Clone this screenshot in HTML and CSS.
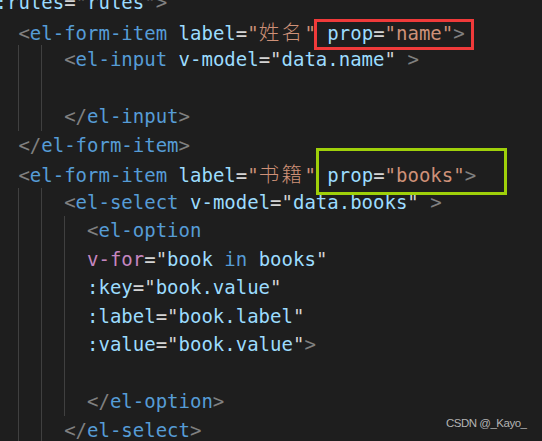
FILE: index.html
```html
<!DOCTYPE html>
<html lang="zh">
<head>
  <meta charset="UTF-8" />
  <title>el-form-item prop</title>
  <link rel="stylesheet" href="styles.css">
</head>
<body>
  <div class="editor">
    <div class="code">
      <div class="ln"><span class="a">:rules</span><span class="p">="</span><span class="v">rules</span><span class="p">"</span><span class="t">&gt;</span></div>
      <div class="ln">  <span class="t">&lt;</span><span class="n">el-form-item</span> <span class="a">label</span><span class="p">=</span><span class="s">"<span class="cjk">姓名</span>"</span> <span class="a">prop</span><span class="p">=</span><span class="s">"name"</span><span class="t">&gt;</span></div>
      <div class="ln">  <span class="ig"></span><span class="ig"></span><span class="t">&lt;</span><span class="n">el-input</span> <span class="a">v-model</span><span class="p">="</span><span class="v">data.name</span><span class="p">"</span> <span class="t">&gt;</span></div>
      <div class="ln">  <span class="ig"></span><span class="ig"></span></div>
      <div class="ln">  <span class="ig"></span><span class="ig"></span><span class="t">&lt;/</span><span class="n">el-input</span><span class="t">&gt;</span></div>
      <div class="ln">  <span class="t">&lt;/</span><span class="n">el-form-item</span><span class="t">&gt;</span></div>
      <div class="ln">  <span class="t">&lt;</span><span class="n">el-form-item</span> <span class="a">label</span><span class="p">=</span><span class="s">"<span class="cjk">书籍</span>"</span> <span class="a">prop</span><span class="p">=</span><span class="s">"books"</span><span class="t">&gt;</span></div>
      <div class="ln">  <span class="ig"></span><span class="ig"></span><span class="t">&lt;</span><span class="n">el-select</span> <span class="a">v-model</span><span class="p">="</span><span class="v">data.books</span><span class="p">"</span> <span class="t">&gt;</span></div>
      <div class="ln">  <span class="ig"></span><span class="ig"></span><span class="ig"></span><span class="t">&lt;</span><span class="n">el-option</span></div>
      <div class="ln">  <span class="ig"></span><span class="ig"></span><span class="ig"></span><span class="d">v-for</span><span class="p">="</span><span class="v">book</span> <span class="k">in</span> <span class="v">books</span><span class="p">"</span></div>
      <div class="ln">  <span class="ig"></span><span class="ig"></span><span class="ig"></span><span class="a">:key</span><span class="p">="</span><span class="v">book.value</span><span class="p">"</span></div>
      <div class="ln">  <span class="ig"></span><span class="ig"></span><span class="ig"></span><span class="a">:label</span><span class="p">="</span><span class="v">book.label</span><span class="p">"</span></div>
      <div class="ln">  <span class="ig"></span><span class="ig"></span><span class="ig"></span><span class="a">:value</span><span class="p">="</span><span class="v">book.value</span><span class="p">"</span><span class="t">&gt;</span></div>
      <div class="ln">  <span class="ig"></span><span class="ig"></span><span class="ig"></span></div>
      <div class="ln">  <span class="ig"></span><span class="ig"></span><span class="ig"></span><span class="t">&lt;/</span><span class="n">el-option</span><span class="t">&gt;</span></div>
      <div class="ln">  <span class="ig"></span><span class="ig"></span><span class="t">&lt;/</span><span class="n">el-select</span><span class="t">&gt;</span></div>
    </div>

    <!-- 标注框 -->
    <div class="mark mark-red"></div>
    <div class="mark mark-green"></div>

    <div class="watermark">CSDN @_Kayo_</div>
  </div>
</body>
</html>
```

FILE: styles.css
```css
html, body {
  margin: 0;
  padding: 0;
  background: #1e1e1e;
  overflow: hidden;
}

.editor {
  position: relative;
  width: 542px;
  height: 441px;
  overflow: hidden;
  background: #1e1e1e;
}

.code {
  margin-top: -12px;
  margin-left: -4.5px;
  font-family: "DejaVu Sans Mono", "Liberation Mono", monospace;
  font-size: 19px;
  color: #d4d4d4;
}

.ln {
  height: 28.5px;
  line-height: 28.5px;
  white-space: pre;
}

/* indent guides */
.ig {
  display: inline-block;
  width: 2ch;
  height: 28.5px;
  vertical-align: top;
  box-shadow: inset 1px 0 0 #404040;
}

.t { color: #808080; }
.n { color: #569cd6; }
.a { color: #9cdcfe; }
.p { color: #d4d4d4; }
.s { color: #ce9178; }
.v { color: #9cdcfe; }
.k { color: #569cd6; }
.d { color: #c586c0; }

.cjk {
  font-family: "Noto Sans CJK SC", sans-serif;
  font-size: 20.5px;
  font-weight: 300;
  letter-spacing: 2.38px;
}

.mark {
  position: absolute;
  box-sizing: border-box;
  border: 3px solid;
}

.mark-red {
  left: 314px;
  top: 19px;
  width: 160px;
  height: 31px;
  border-color: #f03a3a;
}

.mark-green {
  left: 316px;
  top: 148px;
  width: 191px;
  height: 47px;
  border-color: #9fd00a;
}

.watermark {
  position: absolute;
  left: 446px;
  top: 417px;
  font-family: "Liberation Sans", Arial, sans-serif;
  font-size: 11.5px;
  color: #b4b4b4;
  letter-spacing: -0.5px;
}
```
